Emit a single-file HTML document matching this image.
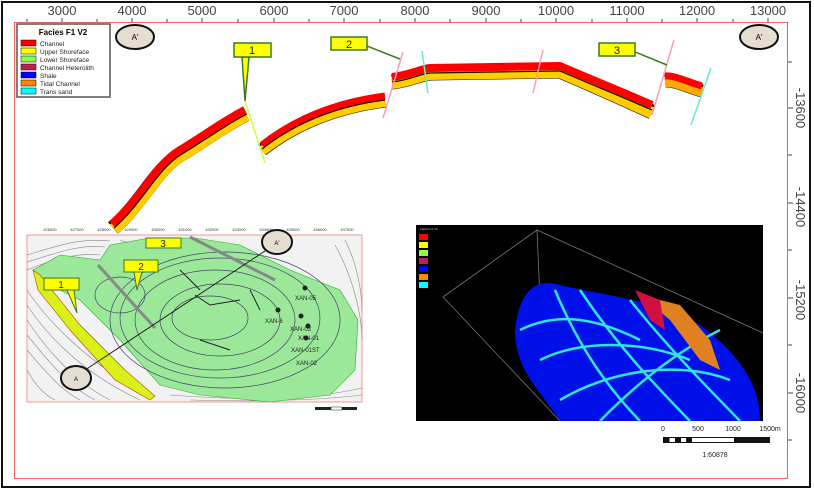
<!DOCTYPE html>
<html><head><meta charset="utf-8"><style>
html,body{margin:0;padding:0;background:#fff;}
svg{display:block;font-family:"Liberation Sans",sans-serif;}
</style></head><body>
<svg width="814" height="490" viewBox="0 0 814 490">
<rect x="0" y="0" width="814" height="490" fill="#fff"/>
<rect x="2" y="2" width="808" height="485" fill="none" stroke="#111" stroke-width="2"/>
<rect x="14.5" y="22.5" width="773" height="456" fill="none" stroke="#f06060" stroke-width="1"/>
<g font-size="13" fill="#444" text-anchor="middle">
<text x="62" y="15">3000</text><text x="132" y="15">4000</text><text x="202" y="15">5000</text><text x="274" y="15">6000</text><text x="344" y="15">7000</text><text x="415" y="15">8000</text><text x="486" y="15">9000</text><text x="556" y="15">10000</text><text x="627" y="15">11000</text><text x="697" y="15">12000</text><text x="768" y="15">13000</text>
</g>
<g stroke="#444" stroke-width="1">
<path d="M27 19v3M62 18v4M97 19v3M132 18v4M167 19v3M202 18v4M238 19v3M274 18v4M309 19v3M344 18v4M380 19v3M415 18v4M450 19v3M486 18v4M521 19v3M556 18v4M592 19v3M627 18v4M662 19v3M697 18v4M733 19v3M768 18v4"/>
<path d="M788 62h4M788 108h5M788 155h4M788 203h5M788 250h4M788 298h5M788 345h4M788 393h5M788 440h4"/>
</g>
<g font-size="13" fill="#444" text-anchor="middle">
<text transform="translate(796,108) rotate(90)">-13600</text>
<text transform="translate(796,207) rotate(90)">-14400</text>
<text transform="translate(796,300) rotate(90)">-15200</text>
<text transform="translate(796,393) rotate(90)">-16000</text>
</g>
<rect x="17" y="24" width="93" height="73" fill="#fff" stroke="#555" stroke-width="1.5"/>
<text x="63" y="35" font-size="8" font-weight="bold" text-anchor="middle">Facies F1 V2</text>
<g font-size="6.5" fill="#222">
<rect x="21" y="40" width="15" height="6" fill="#f00" stroke="#000" stroke-width=".5"/><text x="40" y="46">Channel</text>
<rect x="21" y="48" width="15" height="6" fill="#ff0" stroke="#000" stroke-width=".5"/><text x="40" y="54">Upper Shoreface</text>
<rect x="21" y="56" width="15" height="6" fill="#8f4" stroke="#000" stroke-width=".5"/><text x="40" y="62">Lower Shoreface</text>
<rect x="21" y="64" width="15" height="6" fill="#c02050" stroke="#000" stroke-width=".5"/><text x="40" y="70">Channel Heterolith</text>
<rect x="21" y="72" width="15" height="6" fill="#00f" stroke="#000" stroke-width=".5"/><text x="40" y="78">Shale</text>
<rect x="21" y="80" width="15" height="6" fill="#f80" stroke="#000" stroke-width=".5"/><text x="40" y="86">Tidal Channel</text>
<rect x="21" y="88" width="15" height="6" fill="#0ff" stroke="#000" stroke-width=".5"/><text x="40" y="94">Trans sand</text>
</g>
<ellipse cx="135" cy="37" rx="19" ry="12" fill="#e4ddd0" stroke="#111" stroke-width="2"/><text x="135" y="40" font-size="8" text-anchor="middle">A'</text>
<ellipse cx="759" cy="37" rx="19" ry="12" fill="#e4ddd0" stroke="#111" stroke-width="2"/><text x="759" y="40" font-size="8" text-anchor="middle">A'</text>
<g fill="none" stroke-linejoin="round">
<path d="M112 226 C140 202 155 167 180 152 C205 137 225 122 245 112" stroke="#111" stroke-width="15" transform="translate(1,2)"/>
<path d="M112 226 C140 202 155 167 180 152 C205 137 225 122 245 112" stroke="#fc0" stroke-width="12" transform="translate(2,3)"/>
<path d="M112 224 C140 200 155 165 180 150 C205 135 225 120 245 110" stroke="#f00" stroke-width="8"/>
<path d="M112 224 C140 200 155 165 180 150 C205 135 225 120 245 110" stroke="#111" stroke-width="1.2" transform="translate(2,4)"/>
<path d="M262 147 C290 125 330 105 385 98" stroke="#111" stroke-width="13" transform="translate(0,3)"/>
<path d="M262 147 C290 125 330 105 385 98" stroke="#fc0" stroke-width="10" transform="translate(0,4)"/>
<path d="M262 145 C290 123 330 103 385 96" stroke="#f00" stroke-width="7"/>
<path d="M262 145 C290 123 330 103 385 96" stroke="#111" stroke-width="1.2" transform="translate(0,4)"/>
<path d="M392 80 C410 78 420 72 430 71 L560 69 C590 82 620 95 652 110" stroke="#111" stroke-width="15" transform="translate(0,2)"/>
<path d="M392 80 C410 78 420 72 430 71 L560 69 C590 82 620 95 652 110" stroke="#fc0" stroke-width="12" transform="translate(0,3)"/>
<path d="M392 77 C410 75 420 69 430 68 L560 66 C590 79 620 91 652 105" stroke="#f00" stroke-width="8"/>
<path d="M392 77 C410 75 420 69 430 68 L560 66 C590 79 620 91 652 105" stroke="#111" stroke-width="1.2" transform="translate(0,5)"/>
<path d="M665 78 C675 77 690 85 702 88" stroke="#111" stroke-width="13" transform="translate(0,3)"/>
<path d="M665 78 C675 77 690 85 702 88" stroke="#fa0" stroke-width="10" transform="translate(0,4)"/>
<path d="M665 76 C675 75 690 83 702 86" stroke="#f00" stroke-width="7"/>
<path d="M245 101 L265 163" stroke="#cf4" stroke-width="1.5"/>
<path d="M403 52 L383 118" stroke="#f9b" stroke-width="1.5"/>
<path d="M422 51 L428 93" stroke="#6eb" stroke-width="1.5"/>
<path d="M543 50 L533 93" stroke="#f9b" stroke-width="1.5"/>
<path d="M674 40 L652 115" stroke="#f9b" stroke-width="1.5"/>
<path d="M711 68 L691 125" stroke="#6eb" stroke-width="1.5"/>
</g>
<g stroke="#3a7a20" stroke-width="1.5">
<path d="M242 57 L245 101 L249 57Z" fill="#ff0"/>
<rect x="234" y="43" width="37" height="14" fill="#ff0"/>
<path d="M367 46 L400 59" fill="none"/>
<rect x="331" y="37" width="36" height="13" fill="#ff0"/>
<path d="M635 52 L667 65" fill="none"/>
<rect x="599" y="43" width="36" height="13" fill="#ff0"/>
</g>
<g font-size="11" text-anchor="middle" fill="#222"><text x="252" y="54">1</text><text x="349" y="48">2</text><text x="617" y="54">3</text></g>
<g font-size="4" fill="#333" text-anchor="middle">
<text x="50" y="231">426000</text><text x="77" y="231">427000</text><text x="104" y="231">428000</text><text x="131" y="231">429000</text><text x="158" y="231">430000</text><text x="185" y="231">431000</text><text x="212" y="231">432000</text><text x="239" y="231">433000</text><text x="266" y="231">434000</text><text x="293" y="231">435000</text><text x="320" y="231">436000</text><text x="347" y="231">437000</text>
</g>
<rect x="27" y="235" width="335" height="167" fill="#f2f2f2" stroke="#f08080" stroke-width=".8"/>
<g fill="none" stroke="#888" stroke-width=".6">
<path d="M27 255 C60 245 80 238 110 241"/><path d="M27 262 C60 252 80 244 105 247"/><path d="M27 270 C50 260 80 252 100 255"/><path d="M27 290 C40 310 80 360 150 396"/><path d="M27 305 C40 325 75 370 140 400"/><path d="M27 320 C40 340 70 380 110 400"/><path d="M27 335 C40 350 65 385 95 400"/><path d="M27 350 C40 365 60 390 80 400"/><path d="M27 370 C35 385 45 395 55 400"/><path d="M170 395 C240 400 300 402 362 388"/><path d="M190 400 C260 402 320 400 362 395"/><path d="M335 245 C355 280 362 320 362 340"/><path d="M345 240 C360 270 362 300 362 310"/><path d="M120 240 C140 248 160 245 180 238"/>
</g>
<path d="M33 270 L60 255 L100 260 L110 245 L150 238 L195 238 L240 245 L290 270 L340 290 L358 320 L355 370 L330 395 L270 402 L200 395 L160 385 L120 340 L80 300 L50 285Z" fill="#9be89b" stroke="#3a3" stroke-width=".6"/>
<path d="M33 270 L40 275 L80 325 L125 370 L155 396 L150 400 L115 380 L70 330 L38 290Z" fill="#d9f019" stroke="#b40" stroke-width=".6"/>
<g fill="none" stroke="#446" stroke-width=".7">
<ellipse cx="215" cy="320" rx="80" ry="50"/><ellipse cx="220" cy="320" rx="60" ry="36"/><ellipse cx="210" cy="318" rx="38" ry="22"/><ellipse cx="225" cy="320" rx="115" ry="68"/><ellipse cx="120" cy="295" rx="25" ry="18"/><ellipse cx="220" cy="318" rx="100" ry="60"/>
</g>
<g stroke="#222" stroke-width="1" fill="none"><path d="M195 295 L210 305 L240 300"/><path d="M200 340 L230 350"/><path d="M250 290 L260 310"/><path d="M180 270 L200 290"/></g>
<g stroke="#888" stroke-width="3" fill="none"><path d="M98 265 L155 328"/><path d="M190 237 L275 280"/></g>
<path d="M76 376 L277 243" stroke="#222" stroke-width="1"/>
<g fill="#222"><circle cx="305" cy="288" r="2.5"/><circle cx="278" cy="310" r="2.5"/><circle cx="301" cy="316" r="2.5"/><circle cx="308" cy="326" r="2.5"/><circle cx="306" cy="338" r="2.5"/></g>
<g font-size="6" fill="#222"><text x="295" y="300">XAN-05</text><text x="265" y="323">XAN-6</text><text x="290" y="331">XAN-03</text><text x="298" y="340">XAN-01</text><text x="291" y="352">XAN-01ST</text><text x="296" y="365">XAN-02</text></g>
<g stroke="#3a7a20" stroke-width="1"><rect x="44" y="278" width="35" height="12" fill="#ff0"/><path d="M67 290 L77 313 L74 290Z" fill="#ff0"/><rect x="124" y="260" width="34" height="12" fill="#ff0"/><path d="M134 272 L137 290 L142 272Z" fill="#ff0"/><rect x="146" y="238" width="35" height="10" fill="#ff0"/></g>
<g font-size="10" text-anchor="middle" fill="#222"><text x="61" y="288">1</text><text x="141" y="270">2</text><text x="163" y="247">3</text></g>
<ellipse cx="76" cy="378" rx="15" ry="12" fill="#e4ddd0" stroke="#111" stroke-width="2"/><text x="76" y="381" font-size="6" text-anchor="middle">A</text>
<ellipse cx="277" cy="242" rx="15" ry="12" fill="#e4ddd0" stroke="#111" stroke-width="2"/><text x="277" y="245" font-size="6" text-anchor="middle">A'</text>
<rect x="315" y="407" width="42" height="3" fill="#222"/><rect x="331" y="407" width="11" height="3" fill="#fff" stroke="#222" stroke-width=".5"/>
<rect x="416" y="225" width="347" height="196" fill="#000"/>
<g fill="none" stroke="#777" stroke-width=".8"><path d="M443 297 L537 230 L763 333"/><path d="M443 297 L560 421"/><path d="M537 230 L540 300"/></g>
<path d="M515 330 C520 290 535 278 560 285 C600 295 660 300 700 325 C740 355 760 385 760 421 L560 421 C540 390 515 370 515 330Z" fill="#0010e8"/>
<g fill="none" stroke="#2ee6e0" stroke-width="2.5">
<path d="M520 330 C560 310 600 320 640 340"/><path d="M540 360 C580 340 640 340 690 360"/><path d="M560 400 C610 370 680 360 730 380"/><path d="M555 290 C580 350 610 390 640 421"/><path d="M580 290 C620 350 660 390 690 421"/><path d="M630 300 C670 350 710 390 740 421"/><path d="M600 421 C640 380 680 350 720 330"/>
</g>
<path d="M640 295 L680 305 L710 340 L720 370 L700 360 L670 320Z" fill="#e08020"/>
<path d="M635 290 L660 300 L665 330 L650 320Z" fill="#d01040"/>
<g font-size="3" fill="#ccc"><text x="420" y="230">Facies F1 V2</text></g>
<g><rect x="419" y="234" width="9" height="6" fill="#f00"/><rect x="419" y="242" width="9" height="6" fill="#ff0"/><rect x="419" y="250" width="9" height="6" fill="#8f4"/><rect x="419" y="258" width="9" height="6" fill="#c02050"/><rect x="419" y="266" width="9" height="6" fill="#00f"/><rect x="419" y="274" width="9" height="6" fill="#f80"/><rect x="419" y="282" width="9" height="6" fill="#0ff"/></g>
<g font-size="7" fill="#222" text-anchor="middle"><text x="663" y="431">0</text><text x="698" y="431">500</text><text x="733" y="431">1000</text><text x="770" y="431">1500m</text><text x="715" y="457">1:60878</text></g>
<rect x="663.5" y="437.5" width="106" height="5" fill="#fff" stroke="#111" stroke-width="1"/>
<rect x="663.5" y="437.5" width="6" height="5" fill="#111"/><rect x="675" y="437.5" width="6" height="5" fill="#111"/><rect x="686" y="437.5" width="6" height="5" fill="#111"/><rect x="734" y="437.5" width="36" height="5" fill="#111"/>
</svg>
</body></html>
